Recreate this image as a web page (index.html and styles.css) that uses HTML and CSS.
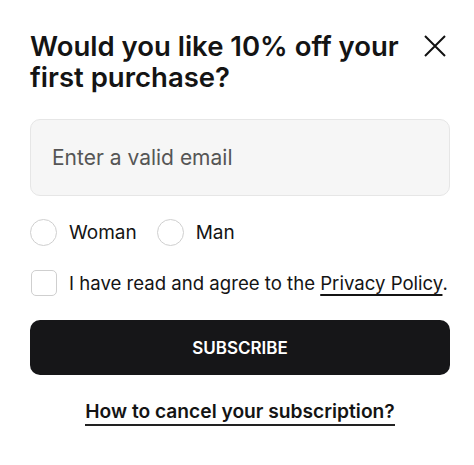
FILE: index.html
```html
<!DOCTYPE html>
<html>
<head>
<meta charset="utf-8">
<link rel="stylesheet" href="styles.css">
</head>
<body>
<div class="popup">
  <div class="header">
    <h1 class="title">Would you like 10% off your first purchase?</h1>
    <button class="close" aria-label="Close">
      <svg width="22" height="22" viewBox="0 0 22 22"><path d="M1 1L21 21M21 1L1 21" stroke="#111" stroke-width="2" fill="none"/></svg>
    </button>
  </div>
  <div class="email">Enter a valid email</div>
  <div class="genders">
    <label class="option"><span class="radio"></span>Woman</label>
    <label class="option"><span class="radio"></span>Man</label>
  </div>
  <label class="consent"><span class="check"></span><span class="consent-text">I have read and agree to the <a class="policy">Privacy Policy</a>.</span></label>
  <button class="subscribe">SUBSCRIBE</button>
  <div class="footer"><a class="cancel">How to cancel your subscription?</a></div>
</div>
</body>
</html>
```
FILE: styles.css
```css
* { box-sizing: border-box; }
body {
  margin: 0;
  background: #fff;
  font-family: Inter, "Noto Sans", sans-serif;
  color: #141414;
}
.popup {
  padding: 31px 28px 0 30px;
  display: flex;
  flex-direction: column;
}
.header {
  display: flex;
  justify-content: space-between;
  align-items: flex-start;
}
.title {
  margin: 0;
  font-size: 27.5px;
  line-height: 31px;
  font-weight: 600;
  letter-spacing: 0;
  width: 380px;
}
.close {
  border: 0;
  background: none;
  padding: 0;
  margin-top: 4px;
  width: 22px;
  height: 22px;
  display: block;
}
.close svg { display: block; }
.email {
  margin-top: 26px;
  width: 420px;
  height: 77px;
  border: 1px solid #e6e6e6;
  background: #f6f6f6;
  border-radius: 10px;
  padding-left: 21px;
  display: flex;
  align-items: center;
  font-size: 21px;
  color: #555;
}
.genders {
  margin-top: 23px;
  display: flex;
}
.option {
  display: flex;
  align-items: center;
  font-size: 19px;
  margin-right: 20px;
  height: 27px;
}
.radio {
  width: 27px;
  height: 27px;
  border: 1.5px solid #cfcfcf;
  border-radius: 50%;
  margin-right: 12px;
}
.consent {
  margin-top: 24px;
  display: flex;
  align-items: center;
  font-size: 18.6px;
  height: 26px;
  white-space: nowrap;
}
.check {
  width: 26px;
  height: 26px;
  margin-left: 1px;
  border: 1.5px solid #cfcfcf;
  border-radius: 5px;
  margin-right: 12px;
  flex: none;
}
.policy {
  text-decoration: underline;
  text-underline-offset: 4px;
  text-decoration-thickness: 1.5px;
}
.subscribe {
  margin-top: 24px;
  width: 420px;
  height: 55px;
  border: 0;
  border-radius: 10px;
  background: #161618;
  color: #fff;
  font-family: Inter, sans-serif;
  font-size: 17px;
  font-weight: 600;
}
.footer {
  width: 420px;
  display: flex;
  justify-content: center;
  margin-top: 24px;
}
.cancel {
  display: block;
  font-size: 19.2px;
  line-height: 24px;
  font-weight: 600;
  color: #141414;
  padding-bottom: 1px;
  border-bottom: 2px solid #222;
}
```
